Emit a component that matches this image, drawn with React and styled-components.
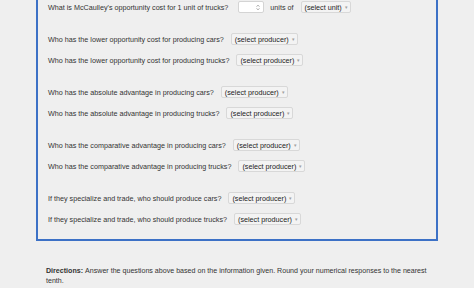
import React from "react";
import styled, { createGlobalStyle } from "styled-components";

const GlobalStyle = createGlobalStyle`
  html, body {
    margin: 0;
    padding: 0;
    background: #ffffff;
  }
`;

const Page = styled.div`
  background: #efefef;
  padding: 0 36px;
  height: 288px;
  box-sizing: border-box;
  font-family: "Liberation Sans", Arial, sans-serif;
  font-size: 7.2px;
  color: #333333;
`;

const Panel = styled.div`
  width: 402px;
  box-sizing: border-box;
  border: 2px solid #3c71c6;
  border-top: none;
  padding: 1px 0 14px 10px;
  display: flex;
  flex-direction: column;
  gap: 20px;
`;

const Group = styled.div`
  display: flex;
  flex-direction: column;
  gap: 9px;
`;

const Row = styled.div`
  display: flex;
  align-items: center;
  height: 12px;
  gap: ${(p) => p.gap || 7}px;
`;

const Label = styled.span`
  white-space: nowrap;
`;

const Select = styled.span`
  display: inline-flex;
  align-items: center;
  height: 12px;
  box-sizing: border-box;
  padding: 0 2px 0 3px;
  border: 1px solid #d8d8d8;
  border-radius: 2px;
  background: #f3f3f3;
  color: #222;
  white-space: nowrap;
  margin-left: ${(p) => p.offset || 0}px;
`;

const Caret = styled.span`
  margin-left: 3px;
  font-size: 4.5px;
  color: #a0a0a0;
`;

const NumberBox = styled.span`
  display: inline-flex;
  align-items: center;
  justify-content: flex-end;
  width: 26px;
  height: 12px;
  box-sizing: border-box;
  border: 1px solid #d4d4d4;
  border-radius: 2px;
  background: #ffffff;
  padding-right: 3px;
  margin-left: 4px;
`;

const Spinner = styled.svg`
  width: 4px;
  height: 7px;
`;

const Directions = styled.p`
  margin: 25px 0 0 10px;
  width: 386px;
  line-height: 10px;
  font-size: 7.1px;
`;

const Caption = styled.b`
  font-weight: 700;
  margin-right: 2px;
`;

const Dropdown = ({ children, offset }) => (
  <Select offset={offset}>
    {children}
    <Caret>▾</Caret>
  </Select>
);

const questions = [
  [
    "Who has the lower opportunity cost for producing cars?",
    "Who has the lower opportunity cost for producing trucks?",
  ],
  [
    "Who has the absolute advantage in producing cars?",
    "Who has the absolute advantage in producing trucks?",
  ],
  [
    "Who has the comparative advantage in producing cars?",
    "Who has the comparative advantage in producing trucks?",
  ],
  [
    "If they specialize and trade, who should produce cars?",
    "If they specialize and trade, who should produce trucks?",
  ],
];

const App = () => {
  return (
    <>
      <GlobalStyle />
      <Page>
        <Panel>
          <Group>
            <Row gap={6}>
              <Label>What is McCaulley's opportunity cost for 1 unit of trucks?</Label>
              <NumberBox>
                <Spinner viewBox="0 0 4 7">
                  <path d="M0.5 2.8 L2 1 L3.5 2.8 M0.5 4.2 L2 6 L3.5 4.2" fill="none" stroke="#9a9a9a" strokeWidth="0.7" />
                </Spinner>
              </NumberBox>
              <Label>units of</Label>
              <Dropdown offset={1}>(select unit)</Dropdown>
            </Row>
          </Group>
          {questions.map((group, i) => (
            <Group key={i}>
              {group.map((text) => (
                <Row key={text}>
                  <Label>{text}</Label>
                  <Dropdown>(select producer)</Dropdown>
                </Row>
              ))}
            </Group>
          ))}
        </Panel>
        <Directions>
          <Caption>Directions:</Caption>
          <span>Answer the questions above based on the information given. Round your numerical responses to the nearest tenth.</span>
        </Directions>
      </Page>
    </>
  );
};

export default App;
